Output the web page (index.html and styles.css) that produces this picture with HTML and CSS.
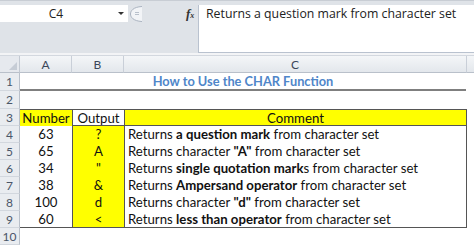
FILE: index.html
```html
<!DOCTYPE html>
<html>
<head>
<meta charset="utf-8">
<link rel="stylesheet" href="styles.css">
</head>
<body>
<div class="app">
  <div class="fbar">
    <div class="fbar-left">
      <div class="nb-row">
        <div class="namebox"><span class="nb-text">C4</span><span class="nb-arrow"></span></div>
        <svg class="grip" width="14" height="16" viewBox="0 0 14 16"><path d="M13 0.5 C4 1 1.5 5 1.5 8 C1.5 11 4 15 13 15.5" fill="#f2f4f7" stroke="#aab3c0" stroke-width="1"/><path d="M6 6.5h4M6 8.5h4" stroke="#b9c1cc" stroke-width="1"/></svg>
        <span class="fx"><i>f</i><span class="fx-x">x</span></span>
      </div>
    </div>
    <div class="formula">Returns a question mark from character set</div>
  </div>
  <div class="gapline"></div>
  <div class="grid">
    <div class="corner"><span class="tri"></span></div>
    <div class="ch">A</div>
    <div class="ch">B</div>
    <div class="ch">C</div>
    <div class="ch last"></div>

    <div class="rh">1</div>
    <div class="title">How to Use the CHAR Function</div>
    <div class="c"></div>

    <div class="rh">2</div>
    <div class="c"></div><div class="c"></div><div class="c"></div><div class="c"></div>

    <div class="rh">3</div>
    <div class="c ya bt cen">Number</div>
    <div class="c bt bl bb cen">Output</div>
    <div class="c ya bt bl br bb cen">Comment</div>
    <div class="c"></div>

    <div class="rh">4</div>
    <div class="c cen">63</div>
    <div class="c ya bl cen">?</div>
    <div class="c bl br">Returns <b>a question mark</b> from character set</div>
    <div class="c"></div>

    <div class="rh">5</div>
    <div class="c cen">65</div>
    <div class="c ya bl cen">A</div>
    <div class="c bl br">Returns character <b>"A"</b> from character set</div>
    <div class="c"></div>

    <div class="rh">6</div>
    <div class="c cen">34</div>
    <div class="c ya bl cen">"</div>
    <div class="c bl br">Returns <b>single quotation mark</b>s from character set</div>
    <div class="c"></div>

    <div class="rh">7</div>
    <div class="c cen">38</div>
    <div class="c ya bl cen">&amp;</div>
    <div class="c bl br">Returns <b>Ampersand operator</b> from character set</div>
    <div class="c"></div>

    <div class="rh">8</div>
    <div class="c cen">100</div>
    <div class="c ya bl cen">d</div>
    <div class="c bl br">Returns character <b>"d"</b> from character set</div>
    <div class="c"></div>

    <div class="rh">9</div>
    <div class="c cen bb">60</div>
    <div class="c ya bl bb cen">&lt;</div>
    <div class="c bl br bb">Returns <b>less than operator</b> from character set</div>
    <div class="c"></div>

    <div class="rh">10</div>
    <div class="c"></div><div class="c"></div><div class="c"></div><div class="c"></div>
  </div>
</div>
</body>
</html>
```

FILE: styles.css
```css
* { box-sizing: border-box; }
html, body { margin: 0; padding: 0; background: #fff; }
.app {
  width: 474px; height: 245px; overflow: hidden;
  display: flex; flex-direction: column;
  font-family: Lato, "Liberation Sans", sans-serif;
}
.fbar {
  height: 53px;
  display: flex;
  background: #dfe3e8;
  padding-top: 4px;
  border-top: 1px solid #c8cdd4;
}
.fbar-left { width: 198px; display: flex; flex-direction: column; }
.nb-row { height: 17px; display: flex; align-items: center; }
.namebox {
  width: 128px; height: 17px; background: #fff;
  display: flex; align-items: center;
  font-family: "Open Sans", "Noto Sans", sans-serif; font-size: 12px; color: #222;
}
.nb-text { flex: 1; text-align: center; padding-right: 6px; }
.nb-arrow {
  width: 0; height: 0; margin-right: 4px;
  border-left: 3px solid transparent; border-right: 3px solid transparent;
  border-top: 3px solid #333;
}
.grip { margin-left: 1px; }
.fx {
  margin-left: 43px; font-family: "Liberation Serif", serif; font-size: 13px; color: #333;
  display: flex; align-items: baseline;
}
.fx i { font-weight: bold; }
.fx-x { font-size: 8px; font-style: italic; font-weight: bold; }
.formula {
  flex: 1; background: #fff;
  border-left: 1px solid #b9c2cf; border-bottom: 1px solid #b9c2cf;
  font-family: "Open Sans", "Noto Sans", sans-serif; font-size: 12.3px; color: #222;
  padding: 0 0 0 7px; line-height: 17px;
}
.gapline { height: 3px; background: #f3f4f6; border-bottom: 1px solid #d3d8df; }
.grid {
  display: grid;
  grid-template-columns: 20px 52px 52px 343px 7px;
  grid-template-rows: 17px 18px 18px repeat(7, 17px) 17px;
  font-size: 13.2px; color: #111;
}
.corner {
  background: #e6e9ee; border-right: 1px solid #c3c9d2; border-bottom: 1px solid #b9c0ca;
  position: relative;
}
.tri {
  position: absolute; right: 2px; bottom: 2px; width: 0; height: 0;
  border-left: 8px solid transparent; border-bottom: 8px solid #c6ccd5;
}
.ch {
  background: linear-gradient(#f4f6f8, #e3e7ec);
  border-right: 1px solid #c9cfd8; border-bottom: 1px solid #b9c0ca;
  display: flex; align-items: center; justify-content: center;
  color: #3b475a; font-size: 12px;
}
.ch.last { border-right: none; }
.rh {
  background: #e9ecf0; border-right: 1px solid #b9c0ca; border-bottom: 1px solid #d2d7de;
  display: flex; align-items: center; justify-content: center;
  color: #4a5668; font-size: 12px;
}
.title {
  grid-column: 2 / span 3;
  border-bottom: 2px solid #7f7f7f;
  margin: 0 1px 0 0;
  text-align: center; font-weight: bold; color: #4f86c9;
  line-height: 16px; font-size: 12.8px;
}
.c { white-space: nowrap; overflow: hidden; line-height: 16px; padding-left: 3px; }
.cen { text-align: center; padding-left: 0; }
.ya { background: #ffff00; }
.bt { border-top: 1px solid #555; }
.bb { border-bottom: 1px solid #555; }
.bl { border-left: 1px solid #555; }
.br { border-right: 1px solid #555; }
```
